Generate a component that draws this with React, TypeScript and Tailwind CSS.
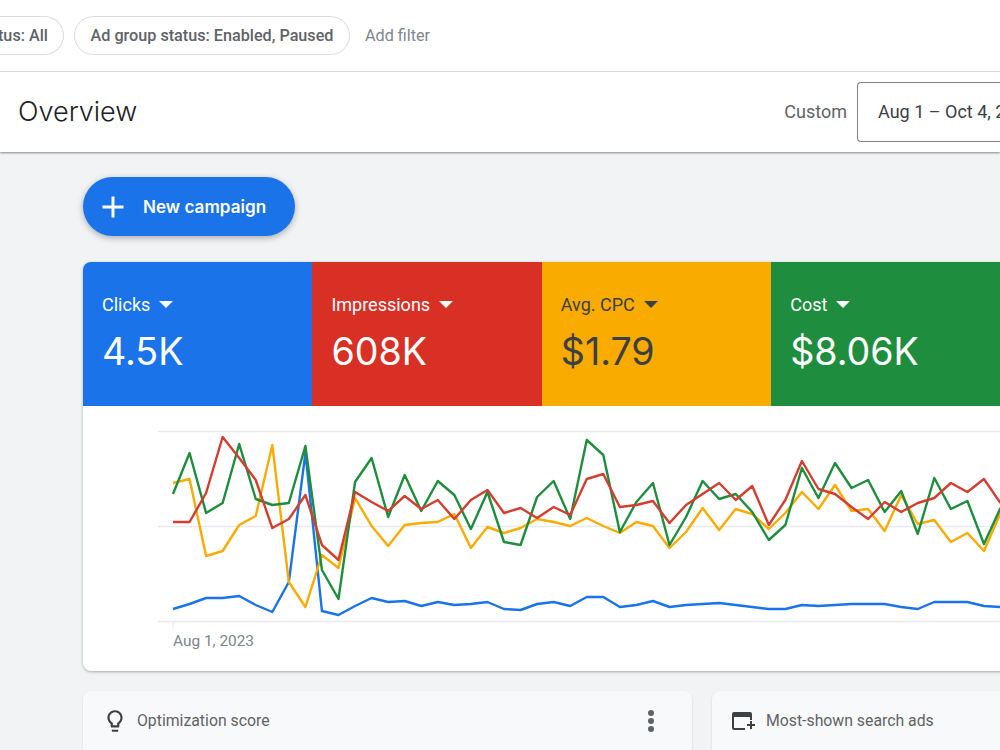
const px = (i: number) => 173 + i * 16.55;

// y values read off the chart, in page pixels
const green = [494,453,513,503,444,499,505,503,446,570,599,482,458,517,475,511,481,495,529,492,542,545,497,481,519,440,455,532,502,483,545,517,481,499,494,512,540,525,468,498,463,488,480,512,491,534,478,509,501,544,508];
const red = [522,522,493,437,458,480,528,519,495,545,560,492,502,511,496,509,500,519,500,490,513,508,518,507,515,479,474,507,505,501,523,505,494,483,500,486,525,500,461,489,494,507,519,502,512,503,498,483,492,479,503];
const yellow = [483,479,556,551,525,516,445,582,607,555,568,498,526,546,525,523,522,514,548,527,533,528,519,522,526,518,526,533,522,526,548,532,508,530,509,514,529,513,492,509,485,511,509,531,495,524,520,542,533,551,513];
const blue = [609,604,598,598,596,605,612,582,453,611,615,606,598,602,601,606,602,605,604,602,609,610,604,602,606,597,597,607,605,601,607,605,604,603,605,607,609,609,605,606,605,604,604,604,607,609,602,602,602,606,607];

const series = [
  { data: blue, color: "#1a73e8" },
  { data: yellow, color: "#f9ab00" },
  { data: green, color: "#1e8e3e" },
  { data: red, color: "#d23f31" },
];

const stats = [
  { label: "Clicks", value: "4.5K", bg: "bg-[#1a73e8]", text: "text-white" },
  { label: "Impressions", value: "608K", bg: "bg-[#d93025]", text: "text-white" },
  { label: "Avg. CPC", value: "$1.79", bg: "bg-[#f9ab00]", text: "text-[#3c4043]" },
  { label: "Cost", value: "$8.06K", bg: "bg-[#1e8e3e]", text: "text-white" },
];

function Caret() {
  return (
    <svg width="14" height="7" viewBox="0 0 14 7" className="ml-[9px] fill-current">
      <path d="M0 0h14L7 7z" />
    </svg>
  );
}

function StatTile({ label, value, bg, text }: (typeof stats)[number]) {
  return (
    <div className={`${bg} ${text} w-[229.4px] h-[144px] shrink-0 pl-[19px] pt-[30px]`}>
      <div className="flex items-center h-[24px] text-[18px] font-['Roboto',sans-serif]">
        {label}
        <Caret />
      </div>
      <div className="mt-[12px] text-[37.6px] leading-[48px] font-['Inter',sans-serif]">{value}</div>
    </div>
  );
}

function Chart() {
  return (
    <svg viewBox="83 406 917 225" className="block w-[917px] h-[225px]" fill="none">
      <path d="M158 431.5H1000M158 526.5H1000M158 621.5H1000" stroke="#e8eaed" strokeWidth="1.5" />
      <path d="M173 622V629" stroke="#e8eaed" />
      {series.map((s) => (
        <polyline
          key={s.color}
          points={s.data.map((y, i) => `${px(i)},${y}`).join(" ")}
          stroke={s.color}
          strokeWidth="2.4"
          strokeLinejoin="round"
        />
      ))}
    </svg>
  );
}

export default function App() {
  return (
    <div className="w-[1000px] h-[750px] overflow-hidden bg-[#f1f3f4] font-['Roboto',sans-serif]">
      <div className="h-[72px] bg-white border-b border-[#e0e0e0] flex items-center gap-[10px] pb-[1px] text-[16.2px]">
        <div className="w-[64px] h-[39px] shrink-0 flex items-center justify-end pt-[2px] pr-[15px] border border-l-0 border-[#dadce0] rounded-r-full font-medium text-[#5f6368] whitespace-nowrap overflow-hidden">
          tus: All
        </div>
        <div className="h-[39px] flex items-center pt-[2px] px-[15.5px] border border-[#dadce0] rounded-full font-medium text-[#5f6368] whitespace-nowrap">
          Ad group status: Enabled, Paused
        </div>
        <div className="ml-[5px] pt-[2px] text-[#80868b]">Add filter</div>
      </div>

      <div className="relative h-[80px] bg-white flex items-center shadow-[0_1px_2px_rgba(60,64,67,0.6)] pl-[18px]">
        <h1 className="text-[27px] text-[#202124] font-light font-['Inter',sans-serif]">Overview</h1>
        <div className="ml-auto pb-[2px] text-[18px] text-[#5f6368] mr-[10px]">Custom</div>
        <div className="w-[143px] h-[60px] flex items-center pl-[20px] pb-[2px] border border-r-0 border-[#80868b] rounded-l-[4px] text-[18px] text-[#3c4043] whitespace-nowrap overflow-hidden">
          Aug 1 – Oct 4, 2023
        </div>
      </div>

      <div className="pl-[83px] pt-[25px]">
        <button className="w-[212px] h-[59px] flex items-center rounded-full bg-[#1a73e8] text-white shadow-[0_2px_6px_rgba(60,64,67,0.4)] pl-[18px]">
          <svg width="24" height="24" viewBox="0 0 24 24" className="fill-current">
            <path d="M22.5 13.5h-9v9h-3v-9h-9v-3h9v-9h3v9h9z" />
          </svg>
          <span className="ml-[18px] text-[17.1px] font-semibold font-['Inter',sans-serif]">New campaign</span>
        </button>

        <div className="mt-[26px] w-[1000px] rounded-[8px] bg-white overflow-hidden shadow-[0_1px_3px_rgba(60,64,67,0.4)]">
          <div className="flex">
            {stats.map((s) => (
              <StatTile key={s.label} {...s} />
            ))}
          </div>
          <Chart />
          <div className="pl-[90px] pb-[20px] h-[40px] text-[15.4px] leading-[20px] text-[#80868b]">Aug 1, 2023</div>
        </div>

        <div className="mt-[20px] flex gap-[20px]">
          <div className="w-[609px] h-[200px] shrink-0 rounded-[8px] bg-[#f8f9fa] shadow-[0_1px_2px_rgba(60,64,67,0.2)] pl-[19px] pr-[29px] pt-[17px]">
            <div className="flex items-center h-[26px]">
              <svg width="26" height="26" viewBox="0 0 24 24" className="fill-[#3c4043]">
                <path d="M9 21c0 .55.45 1 1 1h4c.55 0 1-.45 1-1v-1H9v1zm3-19C8.14 2 5 5.14 5 9c0 2.38 1.19 4.47 3 5.74V17c0 .55.45 1 1 1h6c.55 0 1-.45 1-1v-2.26c1.81-1.27 3-3.36 3-5.74 0-3.86-3.14-7-7-7zm2.85 11.1l-.85.6V16h-4v-2.3l-.85-.6C7.8 12.16 7 10.63 7 9c0-2.76 2.24-5 5-5s5 2.24 5 5c0 1.63-.8 3.16-2.15 4.1z" />
              </svg>
              <span className="ml-[9px] text-[15.8px] text-[#5f6368]">Optimization score</span>
              <svg width="24" height="24" viewBox="0 0 24 24" className="ml-auto fill-[#5f6368]">
                <circle cx="12" cy="4" r="3" />
                <circle cx="12" cy="12" r="3" />
                <circle cx="12" cy="20" r="3" />
              </svg>
            </div>
          </div>
          <div className="w-[609px] h-[200px] shrink-0 rounded-[8px] bg-[#f8f9fa] shadow-[0_1px_2px_rgba(60,64,67,0.2)] pl-[20px] pt-[17px]">
            <div className="flex items-center h-[26px]">
              <svg width="24" height="18" viewBox="0 0 24 18" className="fill-[#3c4043]">
                <path d="M2 0h16a2 2 0 0 1 2 2v6h-2V5H2v11h11v2H2a2 2 0 0 1-2-2V2a2 2 0 0 1 2-2z" />
                <path d="M18 9h2v3h3v2h-3v3h-2v-3h-3v-2h3z" />
              </svg>
              <span className="ml-[10px] text-[15.8px] text-[#5f6368]">Most-shown search ads</span>
            </div>
          </div>
        </div>
      </div>
    </div>
  );
}
